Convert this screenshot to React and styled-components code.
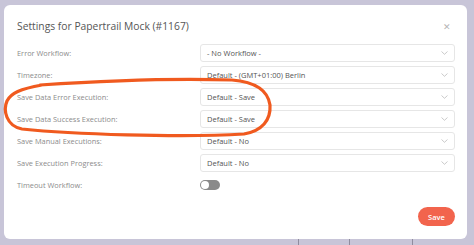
import React from 'react';
import styled, {createGlobalStyle} from 'styled-components';

const GlobalStyle = createGlobalStyle`
  body {
    margin: 0;
    background-color: #c8c5d8;
    font-family: "Open Sans", "Liberation Sans", sans-serif;
  }
`

const Page = styled.div`
  position: relative;
  width: 474px;
  height: 245px;
  padding: 5px 7px 0 4px;
  box-sizing: border-box;
  overflow: hidden;
`

const Dialog = styled.div`
  background-color: #fff;
  border-radius: 6px;
  height: 234px;
  padding: 13px 12px 0 13px;
  box-sizing: border-box;
  display: flex;
  flex-direction: column;
`

const Header = styled.div`
  display: flex;
  justify-content: space-between;
  align-items: center;
  height: 16px;
  margin-bottom: 10px;
`

const Title = styled.h1`
  margin: 0;
  font-size: 10.3px;
  font-weight: 400;
  color: #555;
`

const Close = styled.span`
  font-size: 9px;
  color: #b5b5b5;
  margin-right: 4px;
  line-height: 1;
`

const Row = styled.div`
  display: grid;
  grid-template-columns: 183px 1fr;
  align-items: center;
  height: 18px;
  margin-bottom: 4px;
`

const Label = styled.label`
  font-size: 7.4px;
  color: #8c8c8c;
`

const Select = styled.div`
  display: flex;
  justify-content: space-between;
  align-items: center;
  height: 18px;
  padding: 0 6px 0 6px;
  box-sizing: border-box;
  border: 1px solid #e6e6e6;
  border-radius: 3px;
  font-size: 7.5px;
  color: #555;
`

const Toggle = styled.div`
  position: relative;
  width: 20px;
  height: 10px;
  border-radius: 5px;
  background-color: ${props => props.on ? '#ff6d5a' : '#8a8a8a'};

  &::after {
    content: '';
    position: absolute;
    top: 1px;
    left: ${props => props.on ? '11px' : '1px'};
    width: 8px;
    height: 8px;
    border-radius: 50%;
    background-color: #fff;
  }
`

const Footer = styled.div`
  display: flex;
  justify-content: flex-end;
  margin-top: auto;
  padding-bottom: 13px;
`

const SaveButton = styled.button`
  width: 37px;
  height: 19px;
  border: none;
  border-radius: 10px;
  background-color: #f2644d;
  color: #fff;
  font-family: inherit;
  font-size: 7.5px;
  font-weight: 600;
  padding: 0;
`

const Strip = styled.div`
  display: grid;
  grid-template-columns: 295px 51px 63px 1fr;
  height: 6px;
`

const Cell = styled.div`
  border-right: ${props => props.last ? 'none' : '1px solid #8f8c9e'};
`

const Scribble = styled.svg`
  position: absolute;
  top: 0;
  left: 0;
  pointer-events: none;
`

function Chevron() {
  return (
    <svg width="7" height="4" viewBox="0 0 7 4">
      <path d="M0.5 0.5 L3.5 3.3 L6.5 0.5" fill="none" stroke="#c4c4c4" strokeWidth="0.9" />
    </svg>
  )
}

const rows = [
  ['Error Workflow:', '- No Workflow -'],
  ['Timezone:', 'Default - (GMT+01:00) Berlin'],
  ['Save Data Error Execution:', 'Default - Save'],
  ['Save Data Success Execution:', 'Default - Save'],
  ['Save Manual Executions:', 'Default - No'],
  ['Save Execution Progress:', 'Default - No'],
]

export default function App() {
  return (
    <>
      <GlobalStyle />
      <Page>
        <Dialog>
          <Header>
            <Title>Settings for Papertrail Mock (#1167)</Title>
            <Close>✕</Close>
          </Header>

          {rows.map(([label, value]) => (
            <Row key={label}>
              <Label>{label}</Label>
              <Select>
                <span>{value}</span>
                <Chevron />
              </Select>
            </Row>
          ))}

          <Row>
            <Label>Timeout Workflow:</Label>
            <Toggle />
          </Row>

          <Footer>
            <SaveButton>Save</SaveButton>
          </Footer>
        </Dialog>

        <Strip>
          <Cell />
          <Cell />
          <Cell />
          <Cell last />
        </Strip>

        <Scribble width="474" height="245" viewBox="0 0 474 245">
          <path
            d="M40 85 C 100 81, 170 78, 232 80 C 256 82, 268 91, 270 105 C 271 120, 262 131, 244 134 C 180 138, 70 134, 22 129 C 6 126, 3 110, 7 101 C 11 93, 20 89, 42 85"
            fill="none"
            stroke="#f05a1f"
            strokeWidth="3.2"
            strokeLinecap="round"
          />
        </Scribble>
      </Page>
    </>
  )
}
